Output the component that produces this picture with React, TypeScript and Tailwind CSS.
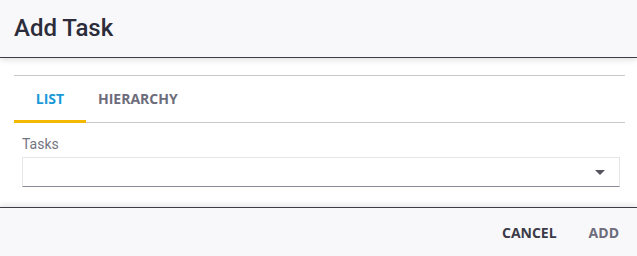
import { useState } from 'react';

export default function App() {
  const [tab, setTab] = useState<'list' | 'hierarchy'>('list');

  return (
    <div className="w-[637px] h-[256px] flex flex-col bg-white overflow-hidden font-['Roboto',sans-serif]">
      {/* Header */}
      <div className="h-[58px] shrink-0 flex items-center pl-[14px] bg-[#f8f8fa] border-b border-[#3d3d4a] shadow-[0_2px_6px_rgba(0,0,0,0.12)] relative z-10">
        <h1 className="text-[24px] font-medium text-[#2c2c3a] leading-none -mt-[2px]">Add Task</h1>
      </div>

      {/* Body */}
      <div className="flex-1 pl-[14px] pr-[12px] pt-[17px]">
        <div className="border-t border-[#c8c8c8]" />
        <div className="flex h-[47px] border-b border-[#c8c8c8] font-['Open_Sans',sans-serif] text-[14px] font-bold">
          <button
            onClick={() => setTab('list')}
            className={`w-[72px] flex items-center justify-center border-b-[3px] -mb-px ${
              tab === 'list' ? 'border-[#f5b800] text-[#1a9ad8]' : 'border-transparent text-[#6c6c7a]'
            }`}
          >
            LIST
          </button>
          <button
            onClick={() => setTab('hierarchy')}
            className={`px-3 flex items-center justify-center border-b-[3px] -mb-px ${
              tab === 'hierarchy' ? 'border-[#f5b800] text-[#1a9ad8]' : 'border-transparent text-[#6c6c7a]'
            }`}
          >
            HIERARCHY
          </button>
        </div>

        <div className="pl-[8px] pr-[5px] pt-[12px]">
          <label className="block text-[14px] text-[#74747f] leading-[18px]">Tasks</label>
          <div className="mt-[4px] h-[30px] flex items-center justify-end pr-[14px] border border-[#e6e6e6] border-b-[#8a8a98]">
            <svg width="10" height="5" viewBox="0 0 10 5">
              <path d="M0 0 L10 0 L5 5 Z" fill="#555560" />
            </svg>
          </div>
        </div>
      </div>

      {/* Footer */}
      <div className="h-[49px] shrink-0 flex items-center justify-end gap-[32px] pr-[18px] bg-[#f8f8fa] border-t border-[#3d3d4a] shadow-[0_-2px_6px_rgba(0,0,0,0.1)] font-['Open_Sans',sans-serif] text-[14px] font-bold">
        <button className="text-[#3b3b48]">CANCEL</button>
        <button className="text-[#6c6c7a]">ADD</button>
      </div>
    </div>
  );
}
